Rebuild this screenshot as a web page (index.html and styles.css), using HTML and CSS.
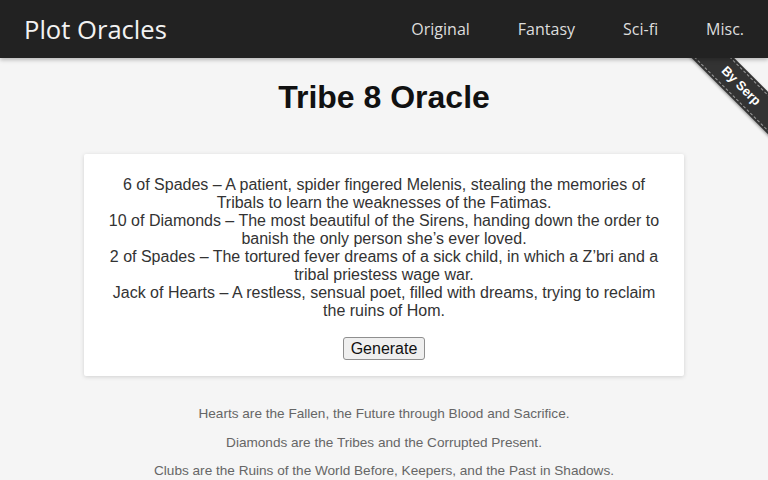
FILE: index.html
```html
<!DOCTYPE html>
<html>
<head>
  <title>Plot Oracles - Tribe 8</title>
  <link rel="stylesheet" href="styles.css">
</head>
<body>
  <div id="page">
    <div id="header">
      <div id="brand">Plot Oracles</div>
      <div id="nav">
        <a href="#">Original</a>
        <a href="#">Fantasy</a>
        <a href="#">Sci-fi</a>
        <a href="#">Misc.</a>
      </div>
    </div>
    <div id="ribbon">By Serp</div>

    <h1>Tribe 8 Oracle</h1>

    <div id="card">
      <div id="result">
        <div>6 of Spades – A patient, spider fingered Melenis, stealing the memories of Tribals to learn the weaknesses of the Fatimas.</div>
        <div>10 of Diamonds – The most beautiful of the Sirens, handing down the order to banish the only person she’s ever loved.</div>
        <div>2 of Spades – The tortured fever dreams of a sick child, in which a Z’bri and a tribal priestess wage war.</div>
        <div>Jack of Hearts – A restless, sensual poet, filled with dreams, trying to reclaim the ruins of Hom.</div>
      </div>
      <button id="generate">Generate</button>
    </div>

    <div id="notes">
      <p>Hearts are the Fallen, the Future through Blood and Sacrifice.</p>
      <p>Diamonds are the Tribes and the Corrupted Present.</p>
      <p>Clubs are the Ruins of the World Before, Keepers, and the Past in Shadows.</p>
    </div>
  </div>
</body>
</html>
```

FILE: styles.css
```css
body {
  margin: 0;
  background-color: #f5f5f5;
  font-family: "Liberation Sans", Arial, sans-serif;
}
#page {
  position: relative;
  overflow: hidden;
  min-height: 480px;
}
#header {
  position: relative;
  z-index: 2;
  display: flex;
  justify-content: space-between;
  align-items: center;
  height: 58px;
  padding-left: 24px;
  background-color: #222;
  box-shadow: 0 2px 4px rgba(0, 0, 0, 0.25);
  font-family: "Open Sans", sans-serif;
}
#brand {
  font-size: 25.6px;
  color: #f2f2f2;
}
#nav {
  display: flex;
}
#nav a {
  padding: 0 24px;
  font-size: 16px;
  color: #ddd;
  text-decoration: none;
}
#ribbon {
  position: absolute;
  z-index: 1;
  top: 71px;
  left: 641px;
  width: 200px;
  height: 30px;
  line-height: 30px;
  background-color: #333;
  color: #fff;
  font-size: 13px;
  font-weight: bold;
  text-align: center;
  transform: rotate(45deg);
  box-shadow: 0 1px 3px rgba(0, 0, 0, 0.4);
  outline: 1px dashed rgba(255, 255, 255, 0.5);
  outline-offset: -3px;
}
h1 {
  margin: 21px 0 38px;
  font-size: 32px;
  line-height: 37px;
  text-align: center;
  color: #111;
}
#card {
  width: 552px;
  margin: 0 auto;
  padding: 22px 24px 16px;
  background-color: #fff;
  border-radius: 2px;
  box-shadow: 0 1px 4px rgba(0, 0, 0, 0.15);
  text-align: center;
}
#result {
  font-size: 16px;
  line-height: 18px;
  color: #333;
}
#generate {
  margin-top: 17px;
  padding: 1px 7px;
  font-family: "Liberation Sans", Arial, sans-serif;
  font-size: 16px;
  line-height: 19px;
  color: #111;
  background-color: #efefef;
  border: 1px solid #8f8f8f;
  border-radius: 3px;
}
#notes {
  margin-top: 30px;
  text-align: center;
  font-size: 13.6px;
  color: #666;
}
#notes p {
  margin: 0 0 13.5px;
  line-height: 15px;
}
```
